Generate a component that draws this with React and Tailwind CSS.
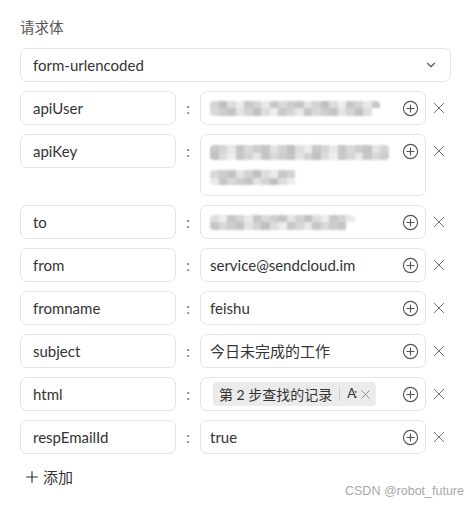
import React from "react";

const FONT = { fontFamily: 'Lato, "Noto Sans CJK SC", sans-serif' };

const shades = ["#d9d9d9", "#cdcdcd", "#c4c4c4", "#e4e4e4", "#d3d3d3", "#c0c0c0", "#dddddd", "#ededed", "#c8c8c8", "#d5d5d5", "#e8e8e8", "#c6c6c6"];

function Mosaic({ cols, rows, seed = 1 }) {
  const lines = [];
  let s = seed;
  for (let r = 0; r < rows; r++) {
    const cells = [];
    for (let c = 0; c < cols[r]; c++) {
      s = (s * 9301 + 49297) % 233280;
      cells.push(<div key={c} className="w-[8.5px] h-[7.5px]" style={{ backgroundColor: shades[s % shades.length] }} />);
    }
    lines.push(
      <div key={r} className="flex">
        {cells}
      </div>
    );
  }
  return <div className="flex flex-col blur-[0.8px] rounded-[4px] overflow-hidden">{lines}</div>;
}

function PlusCircle() {
  return (
    <svg width="17" height="17" viewBox="0 0 24 24" fill="none" stroke="#555" strokeWidth="1.6" strokeLinecap="round">
      <circle cx="12" cy="12" r="10" />
      <path d="M12 7v10M7 12h10" />
    </svg>
  );
}

function XIcon() {
  return (
    <svg width="14" height="14" viewBox="0 0 24 24" fill="none" stroke="#666" strokeWidth="1.6" strokeLinecap="round">
      <path d="M4 4l16 16M20 4L4 20" />
    </svg>
  );
}

function Row({ name, children, tall }) {
  return (
    <div className="flex items-start">
      <div className="w-[156px] h-[34px] shrink-0 border border-[#e3e3e3] rounded-[7px] flex items-center pl-[12px] text-[15px] text-[#333]">
        {name}
      </div>
      <div className="w-[24px] h-[34px] shrink-0 flex items-center justify-center text-[15px] text-[#777]">:</div>
      <div className={`w-[226px] shrink-0 border border-[#e3e3e3] rounded-[7px] flex items-start pl-[9px] pr-[6px] ${tall ? "h-[62px]" : "h-[34px]"}`}>
        <div className="flex-1 min-w-0 h-[32px] flex items-center text-[15px] text-[#333]">{children}</div>
        <div className="h-[32px] flex items-center shrink-0">
          <PlusCircle />
        </div>
      </div>
      <div className="w-[25px] h-[34px] shrink-0 flex items-center justify-center">
        <XIcon />
      </div>
    </div>
  );
}

export default function App() {
  return (
    <div className="w-[474px] h-[507px] bg-white relative overflow-hidden" style={FONT}>
      <div className="pl-[20px] pt-[18px] w-[451px]">
        <div className="text-[14.5px] text-[#555] leading-[20px]">请求体</div>
        <div className="mt-[10px] h-[34px] border border-[#e3e3e3] rounded-[7px] flex items-center justify-between pl-[12px] pr-[12px] text-[15px] text-[#333]">
          <span>form-urlencoded</span>
          <svg width="14" height="14" viewBox="0 0 24 24" fill="none" stroke="#555" strokeWidth="2" strokeLinecap="round" strokeLinejoin="round">
            <path d="M6 9l6 6 6-6" />
          </svg>
        </div>
        <div className="mt-[9px] flex flex-col gap-[9px]">
          <Row name="apiUser">
            <Mosaic cols={[20, 19]} rows={2} seed={3} />
          </Row>
          <Row name="apiKey" tall>
            <div className="flex flex-col gap-[10px] mt-[28px]">
              <Mosaic cols={[21, 21]} rows={2} seed={7} />
              <Mosaic cols={[10, 10]} rows={2} seed={11} />
            </div>
          </Row>
          <Row name="to">
            <Mosaic cols={[17, 16]} rows={2} seed={5} />
          </Row>
          <Row name="from">service@sendcloud.im</Row>
          <Row name="fromname">feishu</Row>
          <Row name="subject">今日未完成的工作</Row>
          <Row name="html">
            <div className="h-[24px] bg-[#ebebeb] rounded-[4px] flex items-center pl-[6px] pr-[4px] ml-[3px] text-[14px] text-[#333]">
              <span>第 2 步查找的记录</span>
              <span className="w-px h-[14px] bg-[#ccc] mx-[7px]" />
              <span className="text-[13px] tracking-[-2px]">A:</span>
              <svg className="ml-[4px]" width="13" height="13" viewBox="0 0 24 24" fill="none" stroke="#888" strokeWidth="1.6" strokeLinecap="round">
                <path d="M5 5l14 14M19 5L5 19" />
              </svg>
            </div>
          </Row>
          <Row name="respEmailId">true</Row>
        </div>
        <div className="mt-[12px] flex items-center pl-[5px] text-[15px] text-[#333] gap-[4px]">
          <svg width="14" height="14" viewBox="0 0 24 24" fill="none" stroke="#333" strokeWidth="2">
            <path d="M12 2v20M2 12h20" />
          </svg>
          <span>添加</span>
        </div>
      </div>
      <div className="absolute right-[10px] bottom-[6px] text-[12.5px] text-[#a8a8a8]" style={{ fontFamily: '"Liberation Sans", Arial, sans-serif' }}>
        CSDN @robot_future
      </div>
    </div>
  );
}
